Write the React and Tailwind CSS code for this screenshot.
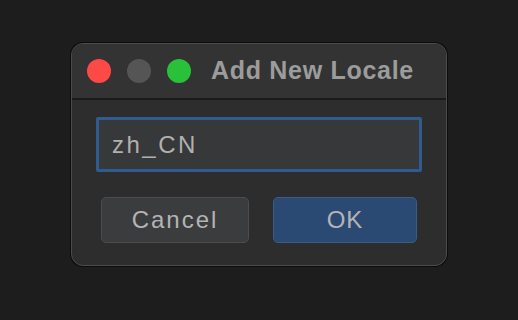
export default function App() {
  return (
    <div className="w-[518px] h-[320px] bg-[#1d1d1d] flex justify-center pt-[43px] font-['Liberation_Sans',Arial,sans-serif]">
      <div className="w-[376px] h-[223px] rounded-[12px] border border-[#4c4c4c] shadow-[0_0_0_1px_#0c0c0c] bg-[#2d2d2d] overflow-hidden flex flex-col">
        {/* Title bar */}
        <div className="h-[56px] bg-[#333333] flex items-center pl-[15px] border-b-2 border-[#1a1a1a] shrink-0">
          <div className="flex gap-[16px]">
            <span className="w-[24px] h-[24px] rounded-full bg-[#fe4a47]" />
            <span className="w-[24px] h-[24px] rounded-full bg-[#555555]" />
            <span className="w-[24px] h-[24px] rounded-full bg-[#29c13a]" />
          </div>
          <span className="ml-[20px] text-[25px] font-bold text-[#9c9c9c] tracking-[0.7px]">Add New Locale</span>
        </div>

        {/* Body */}
        <div className="flex flex-col px-[24px] pt-[17px]">
          <div className="h-[55px] border-[3px] border-[#2f5b8e] rounded-[2px] bg-[#363839] flex items-center pl-[13px]">
            <span className="text-[24px] text-[#b0b0b0] tracking-[2.5px]">zh_CN</span>
          </div>
          <div className="flex gap-[24px] mt-[25px] pl-[5px] pr-[4px]">
            <button className="w-[148px] h-[46px] rounded-[5px] bg-[#3a3c3e] border border-[#4a4c4f] text-[24px] text-[#b4b4b4] tracking-[2px] flex items-center justify-center">
              Cancel
            </button>
            <button className="w-[144px] h-[46px] rounded-[5px] bg-[#2b4a73] border border-[#3b5c88] text-[24px] text-[#b4b4b4] tracking-[1px] flex items-center justify-center">
              OK
            </button>
          </div>
        </div>
      </div>
    </div>
  );
}
